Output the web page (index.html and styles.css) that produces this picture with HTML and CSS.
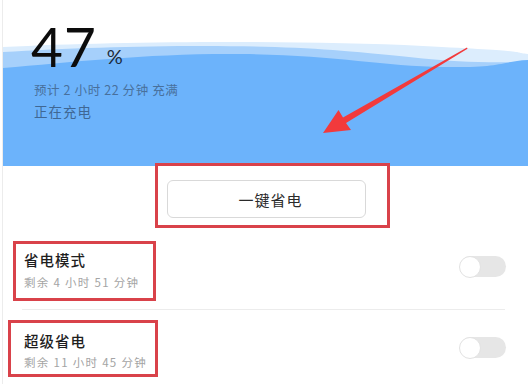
FILE: index.html
```html
<!DOCTYPE html>
<html lang="zh-CN">
<head>
<meta charset="utf-8">
<title>电池</title>
<link rel="stylesheet" href="styles.css">
</head>
<body>
<div class="page">
  <header class="battery">
    <svg class="waves" viewBox="0 0 525 166" preserveAspectRatio="none" aria-hidden="true">
      <path class="w1" d="M0 47 C120 41 300 40 420 46 S505 52 525 54 L525 166 L0 166 Z"/>
      <path class="w2" d="M0 52 C100 46 240 43 330 50 S440 64 525 62 L525 166 L0 166 Z"/>
      <path class="w3" d="M0 68 C70 62 150 53 240 54 S380 66 440 67 S500 61 525 60 L525 166 L0 166 Z"/>
    </svg>
    <div class="level"><span class="num">47</span><span class="pct">%</span></div>
    <p class="eta">预计 2 小时 22 分钟 充满</p>
    <p class="state">正在充电</p>
  </header>

  <section class="action">
    <div class="mark mark-btn">
      <button class="save-btn">一键省电</button>
    </div>
  </section>

  <div class="row row-mode">
    <div class="mark label label-mode">
      <div class="title">省电模式</div>
      <div class="sub">剩余 4 小时 51 分钟</div>
    </div>
    <span class="toggle toggle-mode"><span class="knob"></span></span>
  </div>

  <div class="divider"></div>

  <div class="row row-super">
    <div class="mark label label-super">
      <div class="title">超级省电</div>
      <div class="sub">剩余 11 小时 45 分钟</div>
    </div>
    <span class="toggle toggle-super"><span class="knob"></span></span>
  </div>

  <svg class="arrow" viewBox="0 0 531 384" aria-hidden="true">
    <polygon points="323,133 338.5,110 343,117.5 467,47.5 467.5,48.8 346,123 351,130"/>
  </svg>
</div>
</body>
</html>
```

FILE: styles.css
```css
* { box-sizing: border-box; }

html, body {
  margin: 0;
  padding: 0;
  background: #ffffff;
}

body {
  font-family: "Noto Sans CJK SC", "Noto Sans", sans-serif;
  color: #222;
}

.page {
  position: relative;
  width: 529px;
  height: 384px;
  margin-left: 2px;
  border-left: 1px solid #ececec;
  overflow: hidden;
}

/* ---------- battery header ---------- */
.battery {
  position: relative;
  width: 525px;
  height: 166px;
  padding: 19px 0 0 28px;
}

.waves {
  position: absolute;
  left: 0;
  top: 0;
  width: 525px;
  height: 166px;
  z-index: 0;
}
.waves .w1 { fill: #dcedfd; }
.waves .w2 { fill: #a6d0fb; }
.waves .w3 { fill: #6cb3fb; }

.level, .eta, .state {
  position: relative;
  z-index: 1;
}

.level {
  height: 54px;
  line-height: 54px;
  white-space: nowrap;
}
.num {
  font-family: Lato, "Open Sans", sans-serif;
  font-weight: 400;
  font-size: 55px;
  color: #0c0c0c;
  letter-spacing: 1px;
}
.pct {
  font-family: Lato, "Open Sans", sans-serif;
  font-weight: 400;
  font-size: 20px;
  color: #1c2a3a;
  margin-left: 10px;
  vertical-align: 3px;
}

.eta {
  margin: 9px 0 0 3px;
  font-size: 12.5px;
  line-height: 16px;
  letter-spacing: 0.6px;
  color: #48709c;
}
.state {
  margin: 4px 0 0 3px;
  font-size: 13.5px;
  line-height: 18px;
  letter-spacing: 1px;
  color: #3f6794;
}

/* ---------- annotation boxes ---------- */
.mark {
  border: 3px solid #d9424a;
}

/* ---------- one-key button ---------- */
.action {
  position: relative;
  z-index: 2;
  margin: -3px 0 0 152px;
}
.mark-btn {
  width: 235px;
  height: 65px;
  padding: 14px 0 0 9px;
}
.save-btn {
  display: block;
  width: 199px;
  height: 38px;
  border: 1px solid #d9d9d9;
  border-radius: 6px;
  background: #fff;
  font-family: "Noto Sans CJK SC", sans-serif;
  font-size: 15px;
  letter-spacing: 1px;
  color: #2a2a2a;
  padding: 0 0 0 8px;
}

/* ---------- setting rows ---------- */
.row {
  display: flex;
  justify-content: space-between;
  align-items: flex-start;
}
.row-mode {
  height: 68px;
  margin-top: 13px;
}
.row-super {
  margin-top: 10px;
}

.label .title {
  font-size: 14.5px;
  line-height: 20px;
  font-weight: 500;
  letter-spacing: 1px;
  color: #1e1e1e;
}
.label .sub {
  font-size: 11.5px;
  line-height: 16px;
  letter-spacing: 1.3px;
  color: #a4a4a4;
}

.label-mode {
  width: 143px;
  height: 60px;
  margin-left: 10px;
  padding: 6px 0 0 8px;
}
.label-mode .sub { margin-top: 4px; }

.label-super {
  width: 150px;
  height: 57px;
  margin-left: 5px;
  padding: 8px 0 0 13px;
}
.label-super .sub { margin-top: 3px; }

.divider {
  height: 1px;
  margin: 0 26px 0 19px;
  background: #ececec;
}

/* ---------- toggles ---------- */
.toggle {
  display: block;
  width: 46px;
  height: 21px;
  margin-right: 25px;
  border-radius: 11px;
  background: #e6e6e6;
  padding: 0;
}
.toggle-mode { margin-top: 15px; }
.toggle-super { margin-top: 17px; }

.knob {
  display: block;
  width: 22px;
  height: 22px;
  margin: -0.5px 0 0 -1px;
  border-radius: 50%;
  background: #fff;
  border: 1px solid #e2e2e2;
}

/* ---------- annotation arrow ---------- */
.arrow {
  position: absolute;
  left: -3px;
  top: 0;
  width: 531px;
  height: 384px;
  z-index: 5;
  pointer-events: none;
}
.arrow polygon { fill: #f23a3c; }
```
